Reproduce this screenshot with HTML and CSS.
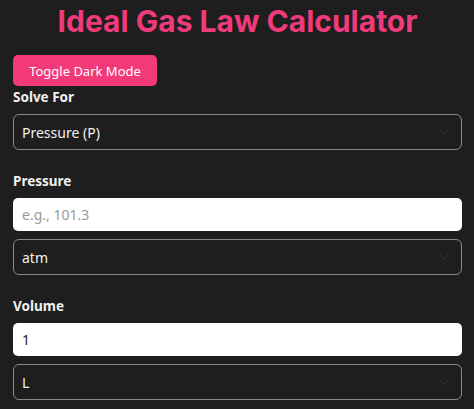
FILE: index.html
```html
<!DOCTYPE html>
<html lang="en">
<head>
<meta charset="utf-8">
<title>Ideal Gas Law Calculator</title>
<link rel="stylesheet" href="styles.css">
</head>
<body>
<main class="app">
  <h1 class="title">Ideal Gas Law Calculator</h1>
  <button class="toggle" type="button">Toggle Dark Mode</button>

  <div class="group">
    <label class="label" for="solve">Solve For</label>
    <div class="select-wrap">
      <select id="solve" class="select">
        <option>Pressure (P)</option>
      </select>
      <svg class="chev" viewBox="0 0 10 6" width="10" height="6"><path d="M1 1l4 4 4-4" fill="none" stroke="#2c2c2c" stroke-width="1.4"/></svg>
    </div>
  </div>

  <div class="group">
    <label class="label" for="p">Pressure</label>
    <input id="p" class="input" type="text" placeholder="e.g., 101.3">
    <div class="select-wrap">
      <select class="select"><option>atm</option></select>
      <svg class="chev" viewBox="0 0 10 6" width="10" height="6"><path d="M1 1l4 4 4-4" fill="none" stroke="#2c2c2c" stroke-width="1.4"/></svg>
    </div>
  </div>

  <div class="group">
    <label class="label" for="v">Volume</label>
    <input id="v" class="input" type="text" value="1">
    <div class="select-wrap">
      <select class="select"><option>L</option></select>
      <svg class="chev" viewBox="0 0 10 6" width="10" height="6"><path d="M1 1l4 4 4-4" fill="none" stroke="#2c2c2c" stroke-width="1.4"/></svg>
    </div>
  </div>
</main>
</body>
</html>
```

FILE: styles.css
```css
html, body {
  margin: 0;
  padding: 0;
  background: #1e1e1e;
}

body {
  font-family: "Noto Sans", "Open Sans", sans-serif;
  color: #f2f2f2;
}

.app {
  padding: 0 12px 0 13px;
  display: flex;
  flex-direction: column;
}

.title {
  margin: 0;
  height: 55px;
  line-height: 43px;
  font-family: "Inter", sans-serif;
  font-weight: 700;
  font-size: 30px;
  color: #ef3a7b;
  text-align: center;
}

.toggle {
  align-self: flex-start;
  width: 144px;
  height: 31px;
  border: none;
  border-radius: 5px;
  background: #f23a78;
  color: #ffffff;
  font-family: "Noto Sans", sans-serif;
  font-size: 13px;
  padding: 0;
  margin-bottom: 1px;
}

.group {
  display: flex;
  flex-direction: column;
  margin-bottom: 21px;
}

.label {
  font-weight: 700;
  font-size: 13.5px;
  line-height: 20px;
  margin-bottom: 7px;
  color: #f0f0f0;
}

.input {
  box-sizing: border-box;
  height: 33px;
  border: none;
  border-radius: 5px;
  background: #ffffff;
  color: #222;
  font-family: "Noto Sans", sans-serif;
  font-size: 14px;
  padding: 0 9px;
  margin-bottom: 8px;
}

.input::placeholder {
  color: #9a9a9a;
}

.select-wrap {
  position: relative;
}

.select {
  appearance: none;
  -webkit-appearance: none;
  box-sizing: border-box;
  width: 100%;
  height: 36px;
  border: 1px solid #8a8a8a;
  border-radius: 6px;
  background: #1e1e1e;
  color: #f2f2f2;
  font-family: "Noto Sans", sans-serif;
  font-size: 14px;
  padding: 0 8px;
}

.chev {
  position: absolute;
  right: 13px;
  top: 15px;
  pointer-events: none;
}
```
